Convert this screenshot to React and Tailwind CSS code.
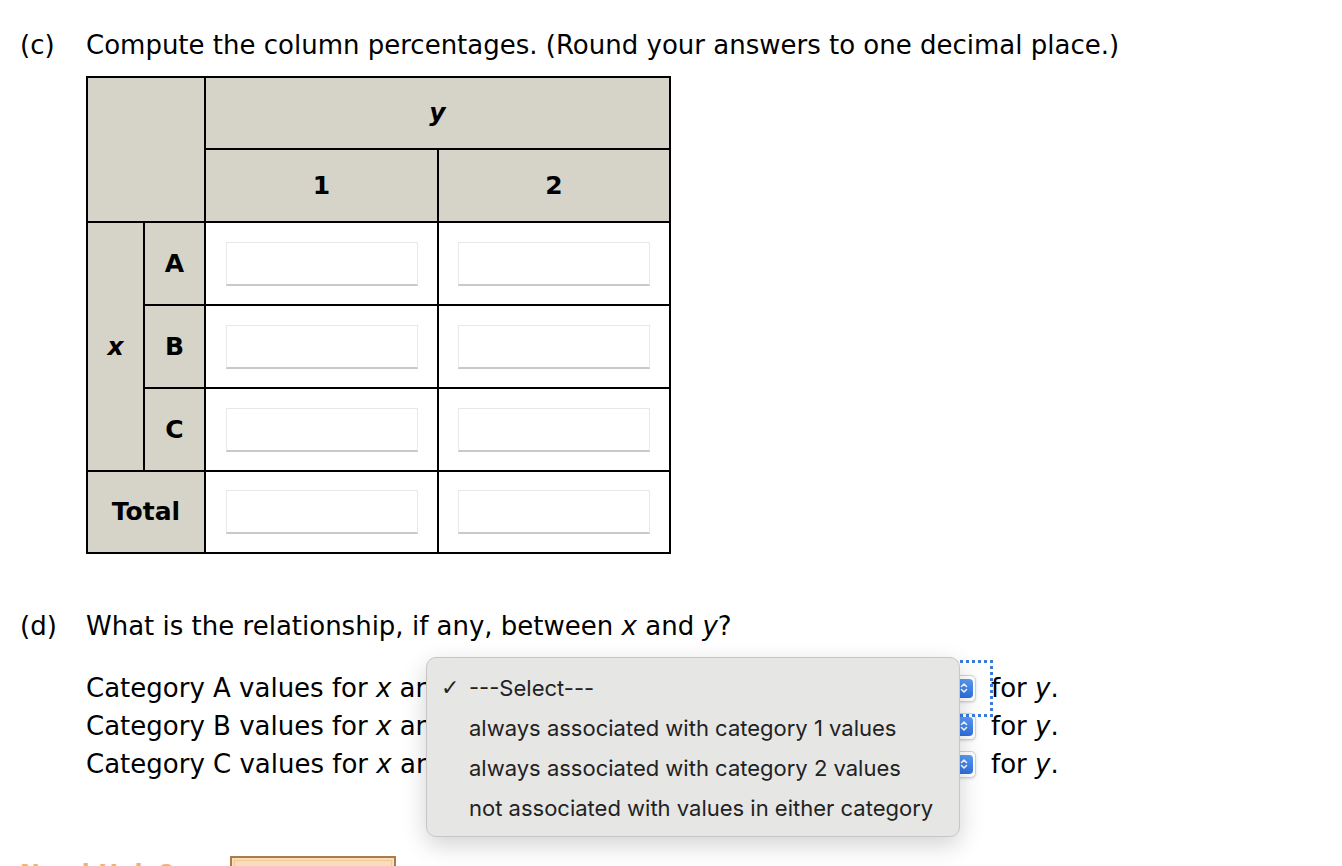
import React from 'react'

const head = 'bg-[#d6d3c9] flex items-center justify-center font-bold text-[25px] text-black'
const cell = 'bg-white flex items-center justify-center'

function Field() {
  return (
    <div className="w-[192px] h-[44px] bg-white border border-[#e8e8e8] border-b-2 border-b-[#c9c9c9]" />
  )
}

function SelectStub() {
  return (
    <div className="w-[540px] h-[27px] rounded-[5px] border border-[#d4d4d4] bg-white shadow-sm flex items-center justify-end pr-[2px]">
      <div className="w-[18px] h-[19px] rounded-[4px] bg-gradient-to-b from-[#5a9cf8] to-[#2f6fe0] flex items-center justify-center">
        <svg width="8" height="12" viewBox="0 0 8 12" fill="none" stroke="white" strokeWidth="1.6" strokeLinecap="round" strokeLinejoin="round">
          <path d="M1.5 4.5 L4 2 L6.5 4.5" />
          <path d="M1.5 7.5 L4 10 L6.5 7.5" />
        </svg>
      </div>
    </div>
  )
}

const rows = ['A', 'B', 'C']

const options = [
  '---Select---',
  'always associated with category 1 values',
  'always associated with category 2 values',
  'not associated with values in either category',
]

export default function App() {
  return (
    <div className="h-[866px] bg-white text-black px-[20px] overflow-hidden" style={{ fontFamily: '"DejaVu Sans", Verdana, sans-serif' }}>
      {/* part c */}
      <div className="flex pt-[29px] text-[26px] leading-[32px]">
        <div className="w-[66px]">(c)</div>
        <div className="whitespace-nowrap">Compute the column percentages. (Round your answers to one decimal place.)</div>
      </div>

      <div className="ml-[66px] mt-[15px] inline-grid bg-black p-[2px] gap-[2px] grid-cols-[55px_59px_231px_230px] grid-rows-[70px_71px_81px_81px_81px_80px]">
        <div className={`${head} col-span-2 row-span-2`} />
        <div className={`${head} col-span-2 italic`}>y</div>
        <div className={head}>1</div>
        <div className={head}>2</div>
        <div className={`${head} row-span-3 italic`}>x</div>
        {rows.map((r) => (
          <React.Fragment key={r}>
            <div className={head} style={{ gridColumn: 2 }}>{r}</div>
            <div className={cell}><Field /></div>
            <div className={cell}><Field /></div>
          </React.Fragment>
        ))}
        <div className={`${head} col-span-2`}>Total</div>
        <div className={cell}><Field /></div>
        <div className={cell}><Field /></div>
      </div>

      {/* part d */}
      <div className="flex mt-[56px] text-[26px] leading-[32px]">
        <div className="w-[66px]">(d)</div>
        <div>What is the relationship, if any, between <i>x</i> and <i>y</i>?</div>
      </div>

      <div className="relative ml-[66px] mt-[27px] text-[26px] leading-[38px]">
        {rows.map((r) => (
          <div key={r} className="flex items-center h-[38px]">
            <div className="w-[340px] whitespace-nowrap">
              Category {r} values for <i>x</i> are
            </div>
            <div className="ml-[10px]"><SelectStub /></div>
            <div className="ml-[15px] whitespace-nowrap">for <i>y</i>.</div>
          </div>
        ))}

        {/* focus ring of first select */}
        <div className="absolute left-[400px] top-[-9px] w-[507px] h-[57px] border-[3px] border-dotted border-[#3a7bd9] pointer-events-none" />

        {/* open dropdown menu */}
        <div
          className="absolute z-10 left-[340px] top-[-12px] w-[534px] h-[180px] rounded-[10px] bg-[#e6e6e5] border border-[#c6c6c6] shadow-[0_8px_24px_rgba(0,0,0,0.18)] py-[10px] text-[22px] text-[#222]"
          style={{ fontFamily: 'Inter, "Liberation Sans", sans-serif' }}
        >
          {options.map((o, i) => (
            <div key={o} className="flex items-center h-[40px] leading-[40px]">
              <div className="w-[42px] pl-[14px] text-[22px] font-bold" style={{ fontFamily: '"DejaVu Sans", sans-serif' }}>
                {i === 0 ? '✓' : ''}
              </div>
              <div>{o}</div>
            </div>
          ))}
        </div>
      </div>

      {/* next part, cut off at the bottom */}
      <div className="flex items-start mt-[73px]">
        <div className="w-[210px] font-bold text-[24px] leading-[28px] text-[#f2b56b] pt-[4px]">Need Help?</div>
        <div className="w-[166px] h-[40px] bg-[#f7ddb8] border-2 border-[#a97c4c]">
          <div className="m-[2px] h-[30px] border border-[#f0c89a]" />
        </div>
      </div>
    </div>
  )
}
